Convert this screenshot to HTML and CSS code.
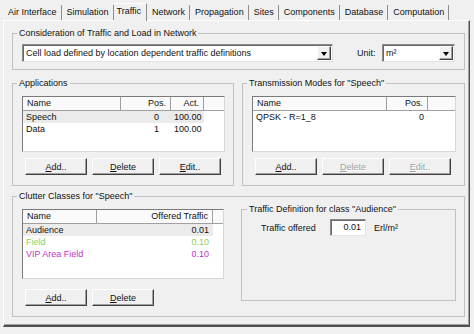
FILE: index.html
```html
<!DOCTYPE html>
<html lang="en">
<head>
    <meta charset="UTF-8">
    <title>Traffic</title>
    <link rel="stylesheet" href="styles.css">
</head>
<body>
    <div class="dialog">
        <!-- Tab strip -->
        <div class="tabs">
            <div class="tab">Air Interface</div>
            <div class="tab">Simulation</div>
            <div class="tab active">Traffic</div>
            <div class="tab">Network</div>
            <div class="tab">Propagation</div>
            <div class="tab">Sites</div>
            <div class="tab">Components</div>
            <div class="tab">Database</div>
            <div class="tab">Computation</div>
        </div>

        <div class="page">
            <!-- Consideration -->
            <fieldset class="group consider">
                <legend>Consideration of Traffic and Load in Network</legend>
                <div class="consider-row">
                    <div class="combo load"><span>Cell load defined by location dependent traffic definitions</span><i class="drop"></i></div>
                    <span class="unit-label">Unit:</span>
                    <div class="combo unit"><span>m²</span><i class="drop"></i></div>
                </div>
            </fieldset>

            <div class="pair">
                <!-- Applications -->
                <fieldset class="group apps">
                    <legend>Applications</legend>
                    <div class="list apps-list">
                        <div class="head">
                            <span class="a-name">Name</span>
                            <span class="a-pos num">Pos.</span>
                            <span class="a-act num">Act.</span>
                            <span class="fill"></span>
                        </div>
                        <div class="row sel">
                            <span class="a-name">Speech</span>
                            <span class="a-pos num">0</span>
                            <span class="a-act num">100.00</span>
                        </div>
                        <div class="row">
                            <span class="a-name">Data</span>
                            <span class="a-pos num">1</span>
                            <span class="a-act num">100.00</span>
                        </div>
                    </div>
                    <div class="buttons">
                        <div class="btn"><u>A</u>dd..</div>
                        <div class="btn"><u>D</u>elete</div>
                        <div class="btn"><u>E</u>dit..</div>
                    </div>
                </fieldset>

                <!-- Transmission modes -->
                <fieldset class="group modes">
                    <legend>Transmission Modes for "Speech"</legend>
                    <div class="list modes-list">
                        <div class="head">
                            <span class="m-name">Name</span>
                            <span class="m-pos num">Pos.</span>
                            <span class="fill"></span>
                        </div>
                        <div class="row">
                            <span class="m-name">QPSK - R=1_8</span>
                            <span class="m-pos num">0</span>
                        </div>
                    </div>
                    <div class="buttons">
                        <div class="btn"><u>A</u>dd..</div>
                        <div class="btn disabled"><u>D</u>elete</div>
                        <div class="btn disabled"><u>E</u>dit..</div>
                    </div>
                </fieldset>
            </div>

            <!-- Clutter classes -->
            <fieldset class="group clutter">
                <legend>Clutter Classes for "Speech"</legend>
                <div class="clutter-body">
                    <div class="clutter-left">
                        <div class="list clutter-list">
                            <div class="head">
                                <span class="c-name">Name</span>
                                <span class="c-traffic num">Offered Traffic</span>
                                <span class="fill"></span>
                            </div>
                            <div class="row sel">
                                <span class="c-name">Audience</span>
                                <span class="c-traffic num">0.01</span>
                            </div>
                            <div class="row field">
                                <span class="c-name">Field</span>
                                <span class="c-traffic num">0.10</span>
                            </div>
                            <div class="row vip">
                                <span class="c-name">VIP Area Field</span>
                                <span class="c-traffic num">0.10</span>
                            </div>
                        </div>
                        <div class="buttons">
                            <div class="btn"><u>A</u>dd..</div>
                            <div class="btn"><u>D</u>elete</div>
                        </div>
                    </div>

                    <fieldset class="group definition">
                        <legend>Traffic Definition for class "Audience"</legend>
                        <div class="def-row">
                            <span class="def-label">Traffic offered</span>
                            <div class="edit">0.01</div>
                            <span class="def-unit">Erl/m²</span>
                        </div>
                    </fieldset>
                </div>
            </fieldset>
        </div>
    </div>
</body>
</html>
```

FILE: styles.css
```css
* {
    box-sizing: border-box;
}

body {
    margin: 0;
    background: #f0f0f0;
    font-family: "Liberation Sans", Arial, sans-serif;
    font-size: 9px;
    color: #111;
}

.dialog {
    width: 467px;
    margin: 3px 0 0 3px;
}

/* Tab strip */
.tabs {
    display: flex;
    align-items: flex-end;
    height: 17px;
    position: relative;
    z-index: 1;
}

.tab {
    height: 15px;
    line-height: 15px;
    padding: 0 4px 0 5px;
    border-right: 1px solid #8c8c8c;
    white-space: nowrap;
}

.tab.active {
    height: 18px;
    line-height: 15px;
    margin-bottom: -1px;
    padding: 0 5px 0 3px;
    border-top: 1px solid #fff;
    background: #f0f0f0;
}

/* Tab page */
.page {
    display: flex;
    flex-direction: column;
    padding: 7px 4px 8px 8px;
    border: 1px solid;
    border-color: #fff #505050 #505050 #fff;
    border-bottom-width: 2px;
    box-shadow: inset -1px -1px 0 #a0a0a0, 0 1px 0 #8a8a8a;
}

/* Group boxes */
.group {
    margin: 0;
    min-width: 0;
    padding: 0 8px 0 9px;
    border: 1px solid #c0c0c0;
}

.group legend {
    padding: 0 2px;
    margin-left: -5px;
    line-height: 11px;
}

.consider {
    padding-top: 5px;
    padding-bottom: 7px;
}

.consider-row {
    display: flex;
    align-items: center;
}

.unit-label {
    width: 25px;
    margin-left: 24px;
}

/* Combo boxes */
.combo {
    position: relative;
    height: 18px;
    line-height: 16px;
    padding-left: 3px;
    background: #fff;
    border: 1px solid;
    border-color: #8a8a8a #e3e3e3 #e3e3e3 #8a8a8a;
    box-shadow: inset 1px 1px 0 #6a6a6a;
    white-space: nowrap;
}

.combo.load {
    width: 311px;
}

.combo.unit {
    width: 73px;
}

.drop {
    position: absolute;
    top: 1px;
    right: 1px;
    bottom: 1px;
    width: 14px;
    background: #f0f0f0;
    border: 1px solid;
    border-color: #fff #404040 #404040 #fff;
    box-shadow: inset -1px -1px 0 #a0a0a0;
}

.drop::after {
    content: '';
    position: absolute;
    left: 3px;
    top: 5px;
    border-left: 3.5px solid transparent;
    border-right: 3.5px solid transparent;
    border-top: 4px solid #000;
}

/* Middle row */
.pair {
    display: flex;
    gap: 8px;
    margin-top: 8px;
}

.apps {
    width: 222px;
    padding-bottom: 10px;
}

.modes {
    flex: 1;
    padding-bottom: 10px;
}

/* List views */
.list {
    margin-top: 7px;
    height: 56px;
    background: #fff;
    border: 1px solid;
    border-color: #7a7a7a #d8d8d8 #d8d8d8 #7a7a7a;
    overflow: hidden;
}

.list .head {
    display: flex;
    height: 14px;
    line-height: 13px;
    background: #fafafa;
    border-bottom: 1px solid #a0a0a0;
}

.list .head span {
    padding: 0 4px;
    border-right: 1px solid #a0a0a0;
}

.list .head .fill {
    flex: 1;
    border-right: 0;
}

.row {
    display: flex;
    width: max-content;
    height: 12px;
    line-height: 12px;
}

.row span {
    padding: 0 4px 0 3px;
}

.row.sel {
    background: #ebebeb;
}

.num {
    text-align: right;
}

.a-name { width: 98px; }
.a-pos { width: 50px; }
.a-act { width: 33px; }
.row .a-pos { padding-right: 12px; }

.m-name { width: 134px; }
.m-pos { width: 41px; }

.c-name { width: 74px; }
.c-traffic { width: 116px; }

.row.field { color: #8ed24e; }
.row.vip { color: #c630c6; }

/* Buttons */
.buttons {
    display: flex;
    gap: 5px;
    margin-top: 6px;
    padding-left: 3px;
}

.btn {
    width: 62px;
    height: 17px;
    display: flex;
    align-items: center;
    justify-content: center;
    background: #f0f0f0;
    border: 1px solid;
    border-color: #fff #404040 #404040 #fff;
    box-shadow: inset -1px -1px 0 #a0a0a0;
}

.btn.disabled {
    color: #a0a0a0;
    text-shadow: 1px 1px 0 #fff;
}

/* Clutter classes */
.clutter {
    margin-top: 5px;
    padding-bottom: 10px;
}

.clutter-body {
    display: flex;
    align-items: flex-start;
}

.clutter-left {
    width: 202px;
}

.clutter-list {
    height: 70px;
}

.clutter-left .buttons {
    margin-top: 10px;
}

.definition {
    width: 215px;
    margin-left: 17px;
    margin-top: 2px;
    padding: 4px 8px 64px 19px;
}

.definition legend {
    margin-left: -14px;
}

.def-row {
    display: flex;
    align-items: center;
}

.def-label {
    width: 69px;
}

.edit {
    width: 36px;
    height: 17px;
    line-height: 15px;
    padding-right: 4px;
    text-align: right;
    background: #fff;
    border: 1px solid;
    border-color: #8a8a8a #e3e3e3 #e3e3e3 #8a8a8a;
    box-shadow: inset 1px 1px 0 #6a6a6a;
}

.def-unit {
    margin-left: 8px;
}
```
